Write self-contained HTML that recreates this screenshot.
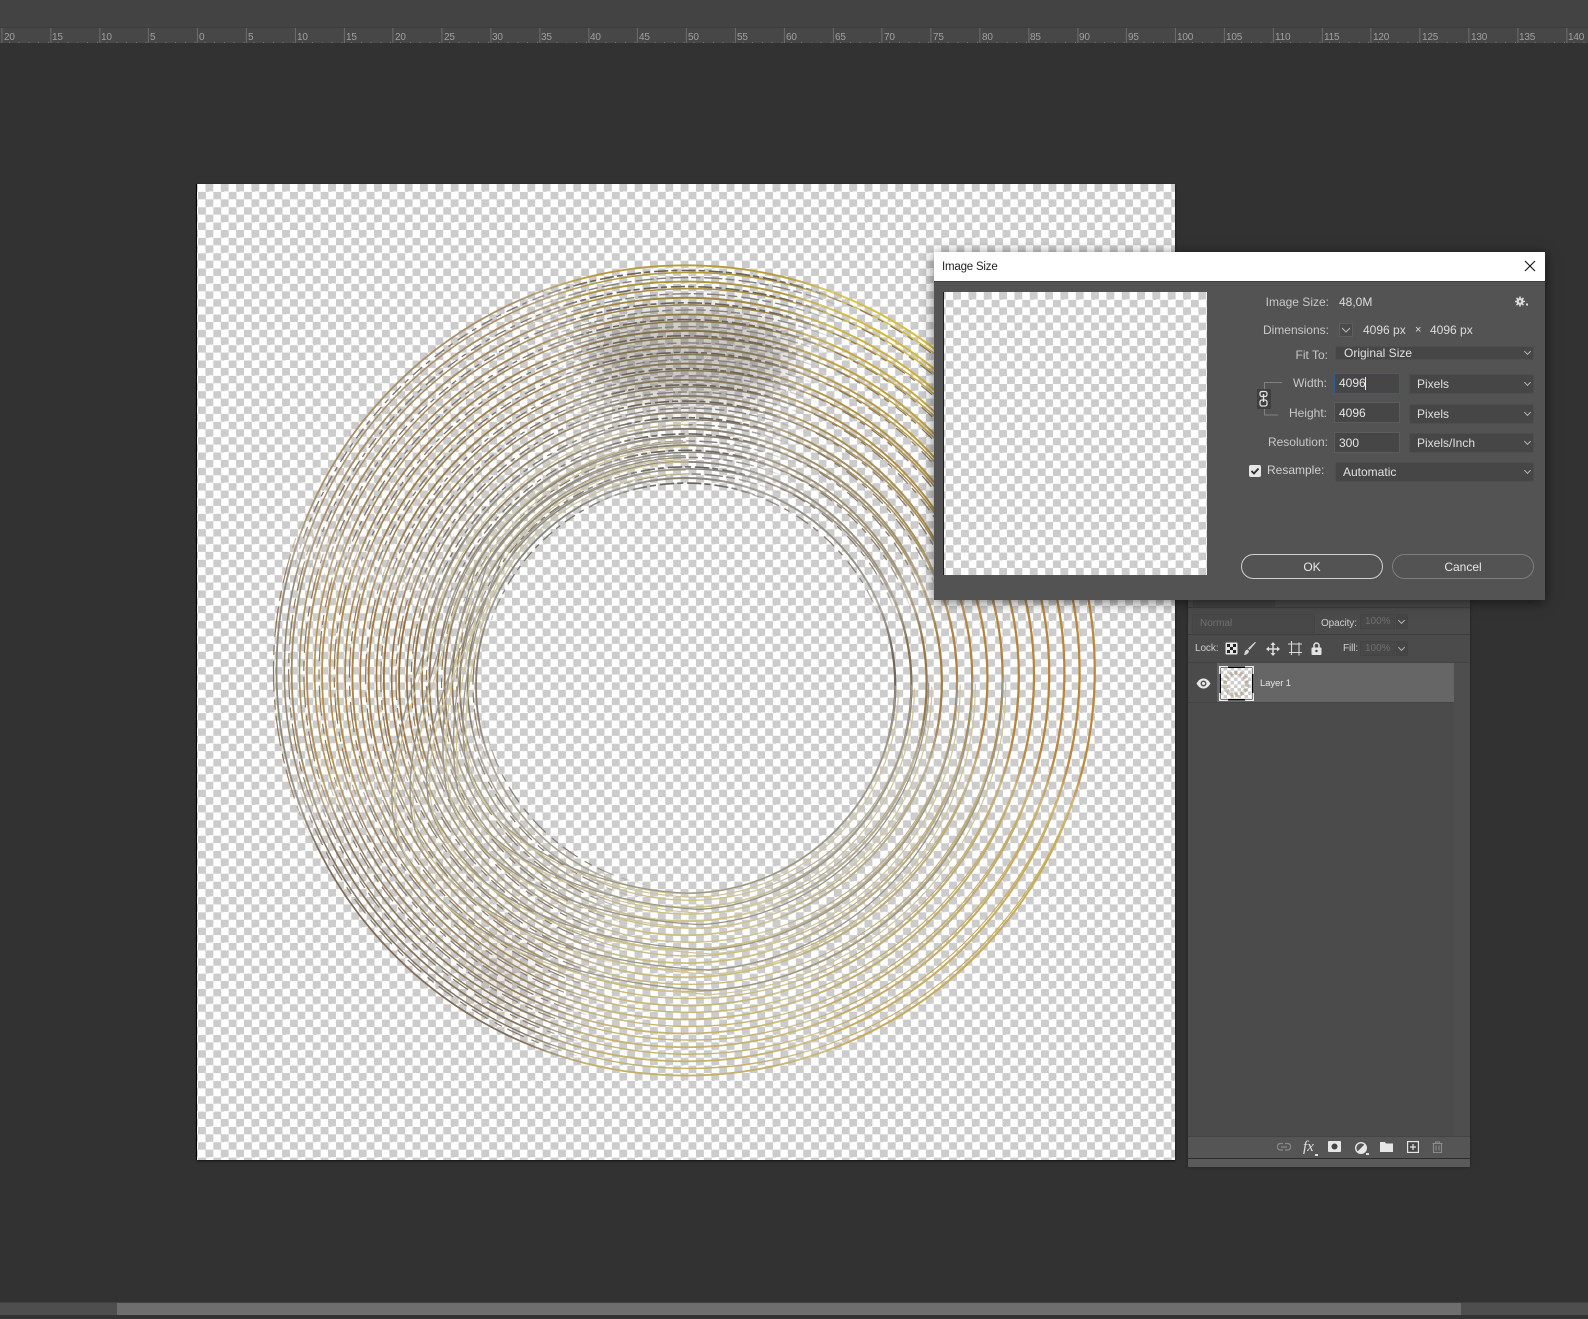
<!DOCTYPE html>
<html><head><meta charset="utf-8"><title>Image Size</title>
<style>
html,body{margin:0;padding:0;background:#323232}
#p{position:relative;width:1588px;height:1319px;overflow:hidden;background:#323232;font-family:"Liberation Sans",sans-serif;color:#cfcfcf}
#p div,#p span,#p svg{position:absolute}
.top{left:0;top:0;width:1588px;height:27px;background:#434343}
.rul{left:0;top:27px;width:1588px;height:16px;background:
 repeating-linear-gradient(90deg,transparent 0 8.8px,#737373 8.8px 9.78px) 0 14px/100% 2px no-repeat,
 repeating-linear-gradient(90deg,#6c6c6c 0 1px,transparent 1px 48.9px) 1.4px 0,#474747;border-top:1px solid #3d3d3d;box-sizing:border-box}
.r{top:32px;font-size:10px;line-height:11px;color:#a0a0a0;white-space:nowrap;letter-spacing:-.2px}
.chk{background:repeating-conic-gradient(#ccc 0 25%,#fff 0 50%);background-size:15.33px 15.33px}
#cv{left:196.5px;top:184px;width:978.5px;height:976px;background-position:1px 0;box-shadow:-1px 0 0 #000,0 1px 2px #111}
#rings{left:0;top:0;width:1588px;height:1319px}
#panel{left:1188px;top:590px;width:282px;height:577px;background:#4b4b4b;box-shadow:0 0 3px rgba(0,0,0,.35)}
.ln{height:1px;background:#3d3d3d}
.pb{box-sizing:border-box;border:1px solid #444;background:#484848;color:#6f6f6f;font-size:10px;line-height:14px;padding-left:5px;white-space:nowrap}
.t{font-size:10px;line-height:12px;white-space:nowrap;color:#cfcfcf;letter-spacing:-.1px}
#dlg{left:934px;top:252px;width:611px;height:348px;background:#535353;box-shadow:0 2px 12px rgba(0,0,0,.55)}
#tb{left:0;top:0;width:611px;height:30px;background:#fff;color:#222;font-size:11.5px;line-height:30px;border-bottom:1px solid #3e3e3e;box-sizing:border-box;letter-spacing:-.2px}
#pv{left:10px;top:39.5px;width:263px;height:283.5px;background-position:1.7px 0;box-shadow:-1px 0 0 #1c1c1c}
.a{width:100px;text-align:right;font-size:12px;line-height:14px;color:#c8c8c8;white-space:nowrap}
.v{font-size:12px;line-height:14px;color:#dcdcdc;white-space:nowrap}
.box{box-sizing:border-box;background:#464646;border:1px solid #5c5c5c;font-size:12px;color:#e4e4e4;white-space:nowrap;padding-left:5px}
.sel{box-sizing:border-box;background:#464646;border:1px solid #4e4e4e;border-radius:2px;font-size:12px;color:#e0e0e0;white-space:nowrap}
.sel i,.pbc i{position:absolute;right:3px;top:50%;width:4px;height:4px;margin-top:-4px;border-right:1px solid #b5b5b5;border-bottom:1px solid #b5b5b5;transform:rotate(45deg)}
.btn{box-sizing:border-box;height:25px;width:142px;border-radius:13px;text-align:center;font-size:12px;line-height:24px;color:#e8e8e8}
</style></head><body><div id="p">
<div class="top"></div>
<div class="rul"></div>
<span class="r" style="left:4px">20</span><span class="r" style="left:52px">15</span><span class="r" style="left:101px">10</span><span class="r" style="left:150px">5</span><span class="r" style="left:199px">0</span><span class="r" style="left:248px">5</span><span class="r" style="left:297px">10</span><span class="r" style="left:346px">15</span><span class="r" style="left:395px">20</span><span class="r" style="left:444px">25</span><span class="r" style="left:492px">30</span><span class="r" style="left:541px">35</span><span class="r" style="left:590px">40</span><span class="r" style="left:639px">45</span><span class="r" style="left:688px">50</span><span class="r" style="left:737px">55</span><span class="r" style="left:786px">60</span><span class="r" style="left:835px">65</span><span class="r" style="left:884px">70</span><span class="r" style="left:933px">75</span><span class="r" style="left:982px">80</span><span class="r" style="left:1030px">85</span><span class="r" style="left:1079px">90</span><span class="r" style="left:1128px">95</span><span class="r" style="left:1177px">100</span><span class="r" style="left:1226px">105</span><span class="r" style="left:1275px">110</span><span class="r" style="left:1324px">115</span><span class="r" style="left:1373px">120</span><span class="r" style="left:1422px">125</span><span class="r" style="left:1471px">130</span><span class="r" style="left:1519px">135</span><span class="r" style="left:1568px">140</span>

<div id="cv" class="chk"></div>
<svg id="rings" viewBox="0 0 1568 1302.4" fill="none">
<defs>
<g id="A">
<ellipse cx="677" cy="662" rx="404" ry="400"/><ellipse cx="677" cy="663" rx="389" ry="385"/><ellipse cx="677" cy="664" rx="374" ry="370"/><ellipse cx="677" cy="665.5" rx="359" ry="355"/><ellipse cx="677" cy="666.6" rx="344" ry="340"/><ellipse cx="677" cy="668" rx="329" ry="325"/><ellipse cx="677" cy="669" rx="313" ry="310"/><ellipse cx="677" cy="670" rx="298" ry="295"/><ellipse cx="677" cy="671" rx="283" ry="280"/><ellipse cx="677" cy="672.4" rx="268" ry="265"/><ellipse cx="677" cy="673.5" rx="253" ry="250"/><ellipse cx="677" cy="674.6" rx="238" ry="235"/><ellipse cx="677" cy="676" rx="223" ry="220"/><ellipse cx="677" cy="677" rx="207" ry="205"/>
</g>
<g id="B">
<ellipse cx="680.7" cy="662" rx="400" ry="393"/><ellipse cx="680.7" cy="663" rx="385" ry="378"/><ellipse cx="680.7" cy="664" rx="370" ry="363"/><ellipse cx="680.7" cy="665.5" rx="355" ry="348"/><ellipse cx="680.7" cy="666.6" rx="340" ry="333"/><ellipse cx="680.7" cy="668" rx="325" ry="318"/><ellipse cx="680.7" cy="669" rx="309" ry="303"/><ellipse cx="680.7" cy="670" rx="294" ry="288"/><ellipse cx="680.7" cy="671" rx="279" ry="273"/><ellipse cx="680.7" cy="672.4" rx="264" ry="258"/><ellipse cx="680.7" cy="673.5" rx="249" ry="243"/><ellipse cx="680.7" cy="674.6" rx="234" ry="228"/><ellipse cx="680.7" cy="676" rx="219" ry="213"/>
</g>
<g id="S">
<path d="M677 437A237 237 0 0 0 470 560C445 640 430 720 441 780C455 840 540 905 691 913A240 238 0 0 0 917 674"/>
<path d="M677 450A226 226 0 0 0 480 560C455 640 440 720 452 780C470 830 560 890 690 898A223 224 0 0 0 900 676"/>
<path d="M677 452A224 224 0 0 0 500 540C465 620 445 710 465 770C490 830 580 878 680 882A207 205 0 0 0 884 677"/>
<path d="M677 464A212 212 0 0 0 510 540C440 650 410 740 425 800C450 870 540 930 700 938A268 264 0 0 0 945 672"/>
<path d="M677 432A242 242 0 0 0 440 620C415 700 395 770 410 820C440 890 540 950 700 958A283 285 0 0 0 960 671"/>
<path d="M677 415A259 259 0 0 0 420 640C395 710 375 780 395 835C430 910 540 970 700 978A313 305 0 0 0 990 669"/>
</g>
<filter id="sf" filterUnits="userSpaceOnUse" x="-200" y="-200" width="2000" height="1800"><feGaussianBlur stdDeviation="22"/></filter>
<mask id="w1" maskUnits="userSpaceOnUse" x="0" y="0" width="1568" height="1303"><polygon fill="#fff" filter="url(#sf)" points="677,670 409,-100 945,-100"/></mask>
<mask id="w2" maskUnits="userSpaceOnUse" x="0" y="0" width="1568" height="1303"><polygon fill="#fff" filter="url(#sf)" points="677,670 945,-100 1500,-100 1500,402 1324,402"/></mask>
<mask id="w3" maskUnits="userSpaceOnUse" x="0" y="0" width="1568" height="1303"><polygon fill="#fff" filter="url(#sf)" points="677,670 1500,402 1500,938"/></mask>
<mask id="w4" maskUnits="userSpaceOnUse" x="0" y="0" width="1568" height="1303"><polygon fill="#fff" filter="url(#sf)" points="677,670 1500,938 1500,1450 945,1450"/></mask>
<mask id="w5" maskUnits="userSpaceOnUse" x="0" y="0" width="1568" height="1303"><polygon fill="#fff" filter="url(#sf)" points="677,670 945,1450 409,1450"/></mask>
<mask id="w6" maskUnits="userSpaceOnUse" x="0" y="0" width="1568" height="1303"><polygon fill="#fff" filter="url(#sf)" points="677,670 409,1450 -100,1450 -100,938"/></mask>
<mask id="w7" maskUnits="userSpaceOnUse" x="0" y="0" width="1568" height="1303"><polygon fill="#fff" filter="url(#sf)" points="677,670 -100,938 -100,402"/></mask>
<mask id="w8" maskUnits="userSpaceOnUse" x="0" y="0" width="1568" height="1303"><polygon fill="#fff" filter="url(#sf)" points="677,670 -100,402 -100,-100 409,-100"/></mask>
<radialGradient id="g1" gradientUnits="userSpaceOnUse" cx="677" cy="670" r="404"><stop offset=".5" stop-color="#8a8780"/><stop offset=".85" stop-color="#84714a"/><stop offset="1" stop-color="#b89c38"/></radialGradient>
<radialGradient id="g2" gradientUnits="userSpaceOnUse" cx="677" cy="670" r="404"><stop offset=".5" stop-color="#969186"/><stop offset=".75" stop-color="#ad8c42"/><stop offset="1" stop-color="#d8be38"/></radialGradient>
<radialGradient id="g3" gradientUnits="userSpaceOnUse" cx="677" cy="670" r="404"><stop offset=".5" stop-color="#6e6258"/><stop offset=".65" stop-color="#ac8240"/><stop offset="1" stop-color="#bc8738"/></radialGradient>
<radialGradient id="g4" gradientUnits="userSpaceOnUse" cx="677" cy="670" r="404"><stop offset=".5" stop-color="#b0ab9c"/><stop offset="1" stop-color="#c8ac58"/></radialGradient>
<radialGradient id="g5" gradientUnits="userSpaceOnUse" cx="677" cy="670" r="404"><stop offset=".5" stop-color="#d0c68c"/><stop offset="1" stop-color="#c4b068"/></radialGradient>
<radialGradient id="g6" gradientUnits="userSpaceOnUse" cx="677" cy="670" r="404"><stop offset=".5" stop-color="#a8a490"/><stop offset=".8" stop-color="#a48c60"/><stop offset="1" stop-color="#7c6854"/></radialGradient>
<radialGradient id="g7" gradientUnits="userSpaceOnUse" cx="677" cy="670" r="404"><stop offset=".5" stop-color="#857c70"/><stop offset=".7" stop-color="#966e36"/><stop offset=".9" stop-color="#b8934a"/><stop offset="1" stop-color="#90887a"/></radialGradient>
<radialGradient id="g8" gradientUnits="userSpaceOnUse" cx="677" cy="670" r="404"><stop offset=".5" stop-color="#8a8780"/><stop offset=".8" stop-color="#9c7c44"/><stop offset="1" stop-color="#a8906a"/></radialGradient>
<filter id="bl" x="-30%" y="-30%" width="160%" height="160%"><feGaussianBlur stdDeviation="14"/></filter>
<clipPath id="band"><path clip-rule="evenodd" d="M273 662a404 400 0 1 0 808 0a404 400 0 1 0-808 0ZM470 677a207 205 0 1 0 414 0a207 205 0 1 0-414 0Z"/></clipPath>
</defs>
<g clip-path="url(#band)">
<ellipse cx="680" cy="350" rx="100" ry="50" fill="#5a5045" opacity=".3" filter="url(#bl)"/>
<ellipse cx="495" cy="960" rx="35" ry="35" fill="#6b6258" opacity=".15" filter="url(#bl)"/>
</g>
<g stroke-width="1.9">
<g mask="url(#w1)" stroke="url(#g1)"><use href="#A"/><use href="#B" stroke-width="1.5"/><use href="#A" transform="translate(0,5)" stroke="#6a6258" stroke-dasharray="14 3 6 4" stroke-width="1.6"/><use href="#B" transform="translate(0,5)" stroke="#85807a" stroke-dasharray="9 4 18 3" stroke-width="1.4"/></g>
<g mask="url(#w2)" stroke="url(#g2)"><use href="#A"/><use href="#B" stroke-width="1.4"/><use href="#A" transform="translate(-2,5)" stroke="#84776a" stroke-dasharray="14 6 6 8" stroke-width="1.2"/></g>
<g mask="url(#w3)" stroke="url(#g3)"><use href="#A" stroke-width="2.2"/><use href="#B" stroke-width="1"/></g>
<g mask="url(#w4)" stroke="url(#g4)"><use href="#A" stroke-width="2"/><use href="#B" stroke-width="1.1"/></g>
<g mask="url(#w5)" stroke="url(#g5)"><use href="#A" stroke-width="1.8"/><use href="#B" stroke-width="1.4"/></g>
<g mask="url(#w6)" stroke="url(#g6)"><use href="#A" stroke-width="1.7"/><use href="#B" stroke-width="1.4"/><use href="#A" transform="translate(4,-4)" stroke="#85796c" stroke-dasharray="18 6 8 8" stroke-width="1.2"/></g>
<g mask="url(#w7)" stroke="url(#g7)"><use href="#A" stroke-width="1.8"/><use href="#B" stroke-width="1.6"/><use href="#A" transform="translate(-3,0)" stroke="#8f7450" stroke-dasharray="30 6 10 8" stroke-width="1.1"/></g>
<g mask="url(#w8)" stroke="url(#g8)"><use href="#A" stroke-width="1.8"/><use href="#B" stroke-width="1.5"/><use href="#A" transform="translate(3,4)" stroke="#7c7468" stroke-dasharray="12 5 5 6" stroke-width="1.3"/></g>
<use href="#S" stroke="#9a9688" stroke-width="1.3"/>
<use href="#S" transform="translate(3,4)" stroke="#cfc59a" stroke-width="1.2"/>
</g>
</svg>

<div id="panel">
<div style="left:5px;top:10px;width:82px;height:7px;background:#434343"></div>
<div class="ln" style="left:0;top:17px;width:282px"></div>
<div class="pb" style="left:4px;top:24px;width:123px;height:19px;padding-left:7px;line-height:18px">Normal</div>
<div class="t" style="left:133px;top:28px">Opacity:</div>
<div class="pb" style="left:172px;top:24px;width:35px;height:15px;line-height:13px;padding-left:4px">100%</div>
<div class="pb pbc" style="left:208px;top:24px;width:12px;height:15px;background:#454545"><i></i></div>
<div class="ln" style="left:0;top:44px;width:282px"></div>
<div class="t" style="left:7px;top:53px">Lock:</div>
<svg style="left:37px;top:52px" width="13" height="13" viewBox="0 0 13 13"><rect x=".5" y=".5" width="12" height="12" rx="1" fill="#e6e6e6"/><path fill="#222" d="M2 2h3v3H2zM8 2h3v3H8zM5 5h3v3H5zM2 8h3v3H2zM8 8h3v3H8z"/></svg>
<svg style="left:55px;top:52px" width="14" height="14" viewBox="0 0 14 14"><path fill="#d8d8d8" d="M13 .5 6.5 8 5 6.5 12 0zM4.500 7.500 6 9c-.4 2.600-2.500 4-5.500 4 1.300-1.200 1-2 1.500-3.500.4-1 1.500-1.800 2.500-2z"/></svg>
<svg style="left:78px;top:52px" width="14" height="14" viewBox="0 0 14 14"><path fill="none" stroke="#ddd" stroke-width="1.5" d="M7 1v12M1 7h12"/><path fill="#ddd" d="M7 0l2.500 3h-5zM7 14l2.500-3h-5zM0 7l3-2.500v5zM14 7l-3-2.500v5z"/></svg>
<svg style="left:100px;top:51px" width="15" height="15" viewBox="0 0 15 15"><path fill="none" stroke="#d8d8d8" stroke-width="1.1" d="M3.500 0v14M0 3h14M11 1.500v13M1 11.500h13"/><rect x="3.500" y="3" width="7.500" height="8.500" fill="none" stroke="#d8d8d8"/></svg>
<svg style="left:123px;top:52px" width="11" height="13" viewBox="0 0 11 13"><path fill="none" stroke="#e4e4e4" stroke-width="1.5" d="M3 6V3.500a2.500 2.500 0 0 1 5 0V6"/><rect x="0.500" y="5.500" width="10" height="7.500" rx="1" fill="#e4e4e4"/><circle cx="5.500" cy="9" r="1.200" fill="#444"/></svg>
<div class="t" style="left:155px;top:53px">Fill:</div>
<div class="pb" style="left:172px;top:51px;width:35px;height:15px;line-height:13px;padding-left:4px">100%</div>
<div class="pb pbc" style="left:208px;top:51px;width:12px;height:15px;background:#454545"><i></i></div>
<div class="ln" style="left:0;top:72px;width:282px;background:#444"></div>
<div style="left:29px;top:73px;width:237px;height:39px;background:#666"></div>
<div style="left:266px;top:73px;width:16px;height:473px;background:#4e4e4e"></div>
<div class="ln" style="left:0;top:112px;width:266px;background:#434343"></div>
<svg style="left:8px;top:88px" width="15" height="11" viewBox="0 0 15 11"><path fill="#e8e8e8" d="M.5 5.500C3 1.500 5 .5 7.500.5S12 1.500 14.500 5.500C12 9.500 10 10.500 7.500 10.500S3 9.500.5 5.500z"/><circle cx="7.500" cy="5.500" r="3" fill="#555"/><circle cx="7.500" cy="5.500" r="1.500" fill="#e8e8e8"/></svg>
<div class="chk" style="left:32px;top:77px;width:33px;height:33px;background-size:7px 7px"></div>
<svg style="left:31px;top:76px" width="35" height="35" fill="none"><circle cx="17" cy="18" r="11" stroke="#a8977a" stroke-width="4" stroke-dasharray="3 2" opacity=".6"/><rect x="1.500" y="1.500" width="32" height="32" stroke="#000"/><path stroke="#eee" stroke-width="1.500" d="M.8 8V.8H9M26 .8h8.200V8M.8 27v7.200H9M26 34.200h8.200V27"/></svg>
<div class="t" style="left:72px;top:88px;color:#e4e4e4;font-size:9.500px">Layer 1</div>
<div style="left:0;top:546px;width:282px;height:22px;background:#555;border-top:1px solid #444;box-sizing:border-box"></div>
<div style="left:0;top:568px;width:282px;height:1px;background:#2c2c2c"></div>
<div style="left:0;top:569px;width:282px;height:8px;background:#5a5a5a"></div>
<svg style="left:89px;top:552px" width="14" height="10" viewBox="0 0 14 10" fill="none" stroke="#8a8a8a" stroke-width="1.200"><path d="M6 1.500H3.500a3.200 3.200 0 0 0 0 6.500H6M8 1.500h2.500a3.200 3.200 0 0 1 0 6.500H8M4 5h6"/></svg>
<span style="left:115px;top:548px;font:italic 15px 'Liberation Serif',serif;color:#e0e0e0;line-height:18px">fx</span>
<div style="left:127px;top:564px;width:3px;height:2px;background:#ddd"></div>
<svg style="left:140px;top:551px" width="13" height="11" viewBox="0 0 13 11"><rect width="13" height="11" rx="1" fill="#e6e6e6"/><circle cx="6.500" cy="5.500" r="3" fill="#444"/></svg>
<svg style="left:167px;top:551px" width="14" height="15" viewBox="0 0 14 15"><circle cx="6" cy="7" r="5.300" fill="#555" stroke="#e6e6e6" stroke-width="1.400"/><path fill="#e6e6e6" d="M9.500 3.500 2.500 10.500A5 5 0 0 0 11 7a5 5 0 0 0-1.500-3.500z"/><rect x="11" y="12" width="3" height="2" fill="#ddd"/></svg>
<svg style="left:192px;top:551px" width="13" height="11" viewBox="0 0 13 11"><path fill="#e6e6e6" d="M0 1h5l1 1.500h7V11H0z"/></svg>
<svg style="left:219px;top:551px" width="12" height="12" viewBox="0 0 12 12"><rect x=".6" y=".6" width="10.800" height="10.800" fill="#444" stroke="#e6e6e6" stroke-width="1.200"/><path stroke="#e6e6e6" stroke-width="1.200" d="M6 3v6M3 6h6"/></svg>
<svg style="left:244px;top:551px" width="11" height="12" viewBox="0 0 11 12" fill="none" stroke="#8a8a8a" stroke-width="1.100"><path d="M.5 2.500h10M3.500 2.500V1h4v1.500M1.500 2.500v9h8v-9M4 4.500v5M7 4.500v5"/></svg>
</div>

<div id="dlg">
<div id="tb"><span style="left:8px;top:0">Image Size</span>
<svg style="left:590px;top:8px" width="12" height="12" viewBox="0 0 12 12"><path stroke="#111" stroke-width="1.100" d="M1 1l10 10M11 1 1 11"/></svg></div>
<div id="pv" class="chk"></div>

<div class="a" style="left:295px;top:43px">Image Size:</div>
<div class="v" style="left:405px;top:43px">48,0M</div>
<svg style="left:581px;top:44px" width="14" height="11" viewBox="0 0 14 11"><path stroke="#ddd" stroke-width="1.600" d="M5 .5v10M0 5.500h10M1.500 2l7 7M8.500 2l-7 7"/><circle cx="5" cy="5.500" r="3.400" fill="#ddd"/><circle cx="5" cy="5.500" r="1.200" fill="#535353"/><rect x="11" y="7.500" width="2" height="2" fill="#ddd"/></svg>
<div class="a" style="left:295px;top:71px">Dimensions:</div>
<div style="left:405px;top:71px;width:14px;height:14px;box-sizing:border-box;background:#4a4a4a;border:1px solid #5e5e5e"></div>
<svg style="left:405px;top:71px" width="14" height="14" fill="none"><path stroke="#bbb" d="M3 5l4 4 4-4"/></svg>
<div class="v" style="left:429px;top:71px">4096 px</div>
<div class="v" style="left:481px;top:71px;font-size:11px">×</div>
<div class="v" style="left:496px;top:71px">4096 px</div>
<div class="a" style="left:294px;top:96px">Fit To:</div>
<div class="sel" style="left:401px;top:94px;width:199px;height:14px;line-height:12px;padding-left:8px">Original Size<i></i></div>
<div class="a" style="left:293px;top:124px">Width:</div>
<div class="box" style="left:400px;top:121px;width:66px;height:21px;line-height:19px;border:1px solid #2f5d99;padding-left:4px">4096<span style="left:30px;top:3px;width:1px;height:13px;background:#eee"></span></div>
<div class="sel" style="left:475px;top:122px;width:125px;height:20px;line-height:19px;padding-left:7px">Pixels<i></i></div>
<div class="a" style="left:293px;top:154px">Height:</div>
<div class="box" style="left:400px;top:150px;width:66px;height:21px;line-height:20px;padding-left:4px">4096</div>
<div class="sel" style="left:475px;top:152px;width:125px;height:20px;line-height:19px;padding-left:7px">Pixels<i></i></div>
<div class="a" style="left:294px;top:183px">Resolution:</div>
<div class="box" style="left:400px;top:180px;width:66px;height:21px;line-height:20px;padding-left:4px">300</div>
<div class="sel" style="left:475px;top:181px;width:125px;height:20px;line-height:19px;padding-left:7px">Pixels/Inch<i></i></div>
<div style="left:315px;top:213px;width:12px;height:12px;border-radius:2px;background:#e6e6e6"></div>
<svg style="left:315px;top:213px" width="12" height="12" fill="none"><path stroke="#2a2a2a" stroke-width="1.800" d="M2.500 6l2.500 2.500 4.500-5"/></svg>
<div class="v" style="left:333px;top:211px;color:#d0d0d0">Resample:</div>
<div class="sel" style="left:401px;top:210px;width:199px;height:20px;line-height:19px;padding-left:7px">Automatic<i></i></div>
<svg style="left:322px;top:128px" width="28" height="36" viewBox="0 0 28 36" fill="none"><path stroke="#808080" d="M8.500 9V2.500H26M8.500 29v6H22"/><rect x="1" y="9" width="14" height="20" fill="#3f3f3f"/><path stroke="#e0e0e0" stroke-width="1.300" d="M5.500 11.500h3.500a2 2 0 0 1 2 2v1a2 2 0 0 1-2 2H6a2 2 0 0 1-2-2v-1a2 2 0 0 1 1.500-2zM6 20h3a2 2 0 0 1 2 2v2a2 2 0 0 1-2 2H6a2 2 0 0 1-2-2v-2a2 2 0 0 1 2-2zM7.500 14v8"/></svg>
<div class="btn" style="left:307px;top:302px;border:1.500px solid #d0d0d0">OK</div>
<div class="btn" style="left:458px;top:302px;border:1.500px solid #7e7e7e">Cancel</div>
</div>

<div style="left:0;top:1302px;width:1588px;height:13px;background:#4e4e4e;border-top:1px solid #414141;box-sizing:border-box"></div>
<div style="left:117px;top:1303px;width:1344px;height:12px;background:#6e6e6e"></div>
<div style="left:0;top:1315px;width:1588px;height:4px;background:#333"></div>
</div></body></html>
